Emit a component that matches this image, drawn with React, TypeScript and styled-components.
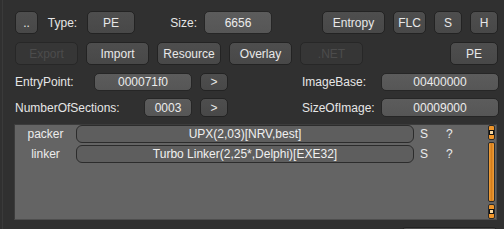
import React from "react";
import styled, { createGlobalStyle } from "styled-components";

const GlobalStyle = createGlobalStyle`
  html, body { margin: 0; padding: 0; background: #303030; }
  body { font-family: "Liberation Sans", Arial, sans-serif; font-size: 12px; color: #e6e6e6; }
`;

const Window = styled.div`
  width: 504px;
  height: 229px;
  overflow: hidden;
  box-sizing: border-box;
  background: #303030;
  border-left: 1px solid #3a3a3a;
  margin-left: 2px;
  padding: 11px 8px 0 12px;
  display: flex;
  flex-direction: column;
`;

const Row = styled.div<{ $h: number; $mt?: number }>`
  display: flex;
  align-items: center;
  flex: none;
  height: ${(p) => p.$h}px;
  margin-top: ${(p) => p.$mt ?? 0}px;
`;

const Group = styled.div`
  display: flex;
  align-items: center;
  gap: 8px;
  height: 100%;
`;

const Spacer = styled.div<{ $w?: number }>`
  flex: ${(p) => (p.$w ? "none" : 1)};
  width: ${(p) => (p.$w ? `${p.$w}px` : "auto")};
`;

const Button = styled.div<{ $w: number; $disabled?: boolean }>`
  width: ${(p) => p.$w}px;
  height: 100%;
  box-sizing: border-box;
  border: 1px solid ${(p) => (p.$disabled ? "#272727" : "#232323")};
  border-radius: 5px;
  background: ${(p) => (p.$disabled ? "#363636" : "linear-gradient(#4e4e4e, #484848)")};
  color: ${(p) => (p.$disabled ? "#4c4c4c" : "#e8e8e8")};
  display: flex;
  align-items: center;
  justify-content: center;
  font-size: 12px;
  flex: none;
`;

const Field = styled.div<{ $w: number }>`
  width: ${(p) => p.$w}px;
  height: 100%;
  box-sizing: border-box;
  border: 1px solid #262626;
  border-radius: 5px;
  background: linear-gradient(#5c5c5c, #565656);
  color: #ececec;
  display: flex;
  align-items: center;
  justify-content: center;
  flex: none;
`;

const Label = styled.div<{ $w: number; $align?: string; $pr?: number }>`
  width: ${(p) => p.$w}px;
  box-sizing: border-box;
  padding-right: ${(p) => p.$pr ?? 0}px;
  text-align: ${(p) => p.$align ?? "left"};
  color: #e6e6e6;
  flex: none;
  white-space: nowrap;
`;

const Cell = styled.div`
  width: 177px;
  display: flex;
  align-items: center;
  justify-content: space-between;
  height: 100%;
  flex: none;
`;

const Panel = styled.div`
  margin-top: 7px;
  margin-left: -1px;
  width: 483px;
  height: 96px;
  box-sizing: border-box;
  background: #646464;
  border: 1px solid #4e4e4e;
  border-top-color: #3c3c3c;
  border-left-color: #3c3c3c;
  display: flex;
  flex: none;
`;

const List = styled.div`
  flex: 1;
  display: flex;
  flex-direction: column;
  gap: 2px;
`;

const ListRow = styled.div`
  display: flex;
  align-items: center;
  height: 18px;
`;

const RowLabel = styled.div`
  width: 61px;
  text-align: center;
  color: #ececec;
  flex: none;
`;

const RowField = styled.div`
  width: 338px;
  height: 18px;
  box-sizing: border-box;
  border: 1px solid #2c2c2c;
  border-radius: 6px;
  background: #5e5e5e;
  display: flex;
  align-items: center;
  justify-content: center;
  color: #f0f0f0;
  flex: none;
`;

const Flag = styled.div<{ $w: number }>`
  width: ${(p) => p.$w}px;
  padding-left: 6px;
  color: #ececec;
  flex: none;
`;

const ScrollBar = styled.div`
  width: 7px;
  margin-right: 1px;
  display: flex;
  flex-direction: column;
  gap: 2px;
  height: 94px;
`;

const ScrollCap = styled.div`
  height: 15px;
  box-sizing: border-box;
  border: 1px solid #2a2a2a;
  border-radius: 2px;
  background: #f0962a;
  display: flex;
  align-items: center;
  justify-content: center;
  flex: none;
  &::after {
    content: "";
    width: 3px;
    height: 3px;
    border: 1px solid #111;
    background: #f5d6a0;
  }
`;

const ScrollThumb = styled.div`
  flex: 1;
  box-sizing: border-box;
  border: 1px solid #2a2a2a;
  border-radius: 2px;
  background: linear-gradient(90deg, #f3a03a, #d57f1c 50%, #f3a03a);
`;

const BottomRow = styled.div`
  margin-top: 7px;
  display: flex;
  justify-content: flex-end;
  height: 20px;
  flex: none;
`;

export default function App() {
  return (
    <>
      <GlobalStyle />
      <Window>
        <Row $h={23}>
          <Button $w={23}>..</Button>
          <Label $w={49} $align="center">Type:</Label>
          <Button $w={48}>PE</Button>
          <Label $w={69} $align="right" $pr={7}>Size:</Label>
          <Field $w={68}>6656</Field>
          <Spacer />
          <Group>
            <Button $w={63}>Entropy</Button>
            <Button $w={33}>FLC</Button>
            <Button $w={28}>S</Button>
            <Button $w={28}>H</Button>
          </Group>
        </Row>
        <Row $h={23} $mt={8}>
          <Group>
            <Button $w={63} $disabled>Export</Button>
            <Button $w={63}>Import</Button>
            <Button $w={64}>Resource</Button>
            <Button $w={63}>Overlay</Button>
            <Button $w={63} $disabled>.NET</Button>
          </Group>
          <Spacer />
          <Button $w={48}>PE</Button>
        </Row>
        <Row $h={18} $mt={8}>
          <Cell>
            <Label $w={70}>EntryPoint:</Label>
            <Field $w={98}>000071f0</Field>
          </Cell>
          <Spacer $w={8} />
          <Button $w={28}>&gt;</Button>
          <Spacer $w={74} />
          <Label $w={79}>ImageBase:</Label>
          <Field $w={118}>00400000</Field>
        </Row>
        <Row $h={19} $mt={7}>
          <Cell>
            <Label $w={110}>NumberOfSections:</Label>
            <Field $w={48}>0003</Field>
          </Cell>
          <Spacer $w={8} />
          <Button $w={28}>&gt;</Button>
          <Spacer $w={74} />
          <Label $w={79}>SizeOfImage:</Label>
          <Field $w={118}>00009000</Field>
        </Row>
        <Panel>
          <List>
            <ListRow>
              <RowLabel>packer</RowLabel>
              <RowField>UPX(2,03)[NRV,best]</RowField>
              <Flag $w={20}>S</Flag>
              <Flag $w={20}>?</Flag>
            </ListRow>
            <ListRow>
              <RowLabel>linker</RowLabel>
              <RowField>Turbo Linker(2,25*,Delphi)[EXE32]</RowField>
              <Flag $w={20}>S</Flag>
              <Flag $w={20}>?</Flag>
            </ListRow>
          </List>
          <ScrollBar>
            <ScrollCap />
            <ScrollThumb />
            <ScrollCap />
          </ScrollBar>
        </Panel>
        <BottomRow>
          <Button $w={97}> </Button>
        </BottomRow>
      </Window>
    </>
  );
}
